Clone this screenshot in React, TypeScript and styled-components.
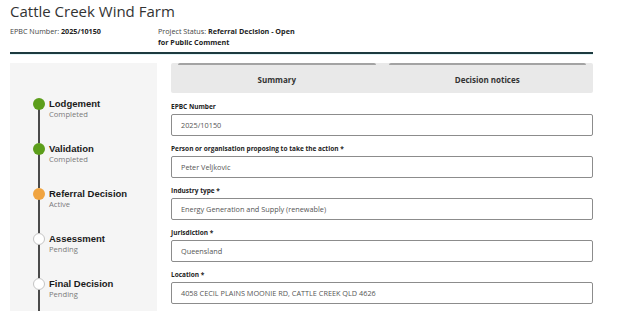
import React from "react";
import styled, { createGlobalStyle } from "styled-components";

const GlobalStyle = createGlobalStyle`
  html, body {
    margin: 0;
    padding: 0;
    background: #ffffff;
    font-family: "Open Sans", "Liberation Sans", sans-serif;
    color: #333333;
  }
`;

const Page = styled.div`
  width: 583px;
  padding: 0 47px 0 10px;
  overflow: hidden;
  height: 311px;
`;

const Title = styled.h1`
  margin: 0;
  padding-top: 1px;
  font-size: 15px;
  line-height: 20px;
  font-weight: 400;
  color: #333333;
`;

const MetaRow = styled.div`
  display: grid;
  grid-template-columns: 148px 150px;
  margin-top: 5px;
  font-size: 7.2px;
  line-height: 11px;
  color: #444444;
`;

const MetaItem = styled.div`
  strong {
    font-weight: 700;
    color: #222222;
  }
`;

const StatusItem = styled(MetaItem)`
  max-width: 142px;
`;

const Divider = styled.div`
  margin-top: 4px;
  height: 2px;
  background: #1d3a3f;
  box-shadow: 0 1px 0 #e3f5f7;
`;

const Main = styled.div`
  display: grid;
  grid-template-columns: 147px 422px;
  column-gap: 14px;
  margin-top: 9px;
`;

const Sidebar = styled.div`
  background: #f5f5f5;
  height: 260px;
  padding: 35px 0 0 23px;
  box-sizing: border-box;
`;

const Step = styled.div`
  display: flex;
  height: 45px;
  gap: 4px;
`;

const Marker = styled.div`
  display: flex;
  flex-direction: column;
  align-items: center;
  width: 12px;
`;

const Dot = styled.div<{ $state: "done" | "active" | "pending" }>`
  flex: none;
  box-sizing: border-box;
  width: 12px;
  height: 12px;
  border-radius: 50%;
  background: ${(p) =>
    p.$state === "done" ? "#5c9e1b" : p.$state === "active" ? "#f0a440" : "#ffffff"};
  border: ${(p) => (p.$state === "pending" ? "1px solid #c4c4c4" : "none")};
  position: relative;
  z-index: 1;
`;

const Connector = styled.div`
  flex: 1;
  width: 2px;
  background: #4a4a4a;
  margin-top: -6px;
`;

const StepText = styled.div`
  padding-top: 1px;
`;

const StepTitle = styled.div`
  font-family: "Liberation Sans", Arial, sans-serif;
  font-weight: 700;
  font-size: 9.5px;
  line-height: 10px;
  color: #1a1a1a;
`;

const StepStatus = styled.div`
  font-size: 7.6px;
  line-height: 10px;
  color: #7a7a7a;
`;

const Content = styled.div`
  display: flex;
  flex-direction: column;
`;

const Tabs = styled.div`
  display: flex;
  gap: 13px;
  padding: 0 7px;
  height: 30px;
  background: #e9e9e9;
  border-radius: 2px;
`;

const Tab = styled.div`
  flex: 1;
  display: flex;
  align-items: center;
  justify-content: center;
  border-top: 2px solid #a3a3a3;
  border-radius: 2px 2px 0 0;
  font-size: 8px;
  font-weight: 700;
  color: #333333;
`;

const Fields = styled.div`
  display: flex;
  flex-direction: column;
  gap: 8px;
  padding-top: 9px;
`;

const Field = styled.div`
  display: flex;
  flex-direction: column;
  gap: 3px;
`;

const Label = styled.label`
  font-size: 6.5px;
  line-height: 9px;
  font-weight: 700;
  color: #222222;
`;

const Input = styled.div`
  box-sizing: border-box;
  height: 22px;
  border: 1px solid #8c8c8c;
  border-radius: 2px;
  padding: 0 9px;
  display: flex;
  align-items: center;
  font-size: 7.3px;
  color: #555555;
  background: #ffffff;
`;

const steps: { title: string; status: string; state: "done" | "active" | "pending" }[] = [
  { title: "Lodgement", status: "Completed", state: "done" },
  { title: "Validation", status: "Completed", state: "done" },
  { title: "Referral Decision", status: "Active", state: "active" },
  { title: "Assessment", status: "Pending", state: "pending" },
  { title: "Final Decision", status: "Pending", state: "pending" },
];

const fields = [
  { label: "EPBC Number", value: "2025/10150", required: false },
  { label: "Person or organisation proposing to take the action", value: "Peter Veljkovic", required: true },
  { label: "Industry type", value: "Energy Generation and Supply (renewable)", required: true },
  { label: "Jurisdiction", value: "Queensland", required: true },
  { label: "Location", value: "4058 CECIL PLAINS MOONIE RD, CATTLE CREEK QLD 4626", required: true },
];

const App: React.FC = () => {
  return (
    <Page>
      <GlobalStyle />
      <Title>Cattle Creek Wind Farm</Title>
      <MetaRow>
        <MetaItem>
          EPBC Number: <strong>2025/10150</strong>
        </MetaItem>
        <StatusItem>
          Project Status: <strong>Referral Decision - Open for Public Comment</strong>
        </StatusItem>
      </MetaRow>
      <Divider />
      <Main>
        <Sidebar>
          {steps.map((s) => (
            <Step key={s.title}>
              <Marker>
                <Dot $state={s.state} />
                <Connector />
              </Marker>
              <StepText>
                <StepTitle>{s.title}</StepTitle>
                <StepStatus>{s.status}</StepStatus>
              </StepText>
            </Step>
          ))}
        </Sidebar>
        <Content>
          <Tabs>
            <Tab>Summary</Tab>
            <Tab>Decision notices</Tab>
          </Tabs>
          <Fields>
            {fields.map((f) => (
              <Field key={f.label}>
                <Label>
                  {f.label}
                  {f.required && " *"}
                </Label>
                <Input>{f.value}</Input>
              </Field>
            ))}
          </Fields>
        </Content>
      </Main>
    </Page>
  );
};

export default App;
